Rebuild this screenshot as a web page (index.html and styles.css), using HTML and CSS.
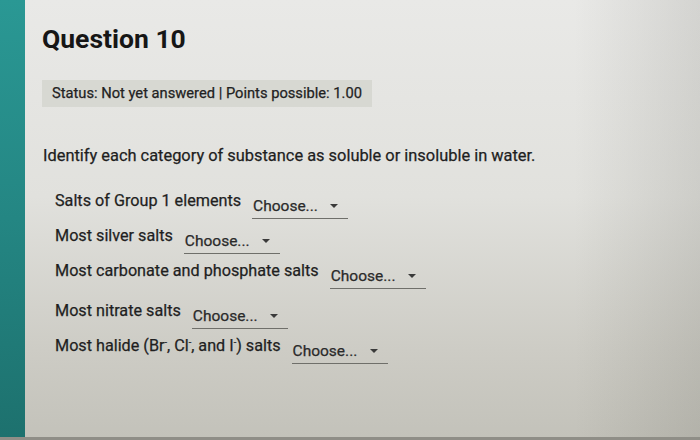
FILE: index.html
```html
<!DOCTYPE html>
<html>
<head>
<meta charset="utf-8">
<link rel="stylesheet" href="styles.css">
</head>
<body>
<div class="screen">
  <div class="sidebar"></div>
  <main class="content">
    <h1 class="title">Question 10</h1>
    <div class="status">Status: Not yet answered | Points possible: 1.00</div>
    <p class="prompt">Identify each category of substance as soluble or insoluble in water.</p>
    <div class="rows">
      <div class="row"><span class="label">Salts of Group 1 elements</span><span class="select">Choose...<span class="caret"></span></span></div>
      <div class="row"><span class="label">Most silver salts</span><span class="select">Choose...<span class="caret"></span></span></div>
      <div class="row"><span class="label">Most carbonate and phosphate salts</span><span class="select">Choose...<span class="caret"></span></span></div>
      <div class="row spaced"><span class="label">Most nitrate salts</span><span class="select">Choose...<span class="caret"></span></span></div>
      <div class="row"><span class="label">Most halide (Br<sup>-</sup>, Cl<sup>-</sup>, and I<sup>-</sup>) salts</span><span class="select">Choose...<span class="caret"></span></span></div>
    </div>
  </main>
</div>
</body>
</html>
```
FILE: styles.css
```css
html, body {
  margin: 0;
  padding: 0;
  width: 700px;
  height: 440px;
  overflow: hidden;
}
body {
  font-family: Roboto, "Liberation Sans", sans-serif;
  color: #1c1c1c;
  background: #8f8e87;
}
.screen {
  display: flex;
  height: 437px;
  background:
    linear-gradient(90deg, rgba(0,0,0,0) 82%, rgba(60,60,50,0.12) 100%),
    linear-gradient(180deg, #e9e9e7 0%, #e1e1dd 45%, #cdccc5 80%, #c3c2ba 100%);
}
.sidebar {
  width: 25px;
  flex: none;
  background: linear-gradient(180deg, #2a9894 0%, #248683 50%, #1d716e 100%);
}
.content {
  flex: 1;
  padding: 24px 0 0 17px;
  -webkit-text-stroke: 0.25px currentColor;
}
.title {
  margin: 0;
  font-size: 26.5px;
  font-weight: 700;
  line-height: 30px;
  color: #161616;
  -webkit-text-stroke: 0;
}
.status {
  display: inline-block;
  margin-top: 26px;
  background: #d7d8d2;
  font-size: 14.7px;
  line-height: 27px;
  padding: 0 10px;
  color: #222;
}
.prompt {
  margin: 37px 0 0 1px;
  font-size: 16.4px;
  line-height: 24px;
  color: #1e1e1e;
}
.rows {
  display: flex;
  flex-direction: column;
  gap: 10px;
  margin-top: 22px;
  padding-left: 13px;
}
.row {
  display: flex;
  align-items: flex-start;
  height: 25px;
  font-size: 16.2px;
}
.row.spaced {
  margin-top: 5px;
}
.label {
  line-height: 22px;
  color: #1f1f1f;
}
.label sup {
  font-size: 9px;
  vertical-align: 6px;
  line-height: 0;
}
.select {
  display: flex;
  align-items: center;
  width: 96px;
  box-sizing: border-box;
  margin: 6px 0 0 11px;
  padding-left: 1px;
  padding-bottom: 2px;
  line-height: 20px;
  font-size: 15.5px;
  color: #2a2a2a;
  border-bottom: 1.5px solid #6f6f6a;
}
.caret {
  margin-left: auto;
  margin-right: 10px;
  width: 0;
  height: 0;
  border-left: 4px solid transparent;
  border-right: 4px solid transparent;
  border-top: 4px solid #3a3a3a;
}
```
